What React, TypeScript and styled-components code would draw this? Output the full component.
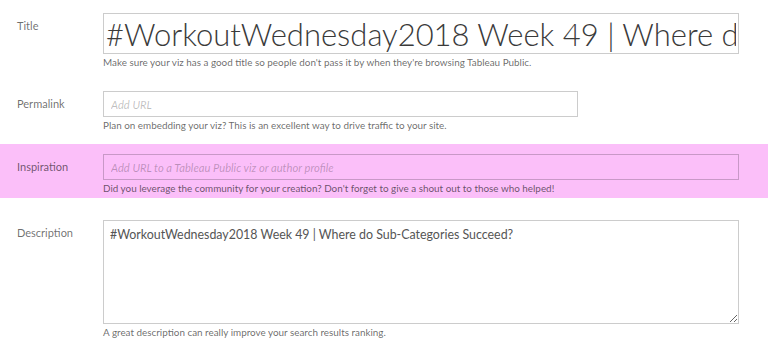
import styled, { createGlobalStyle } from "styled-components";

const Global = createGlobalStyle`
    html, body {
        margin: 0;
        padding: 0;
        background: #ffffff;
    }
    body {
        font-family: "Lato", "Liberation Sans", sans-serif;
        color: #666666;
    }
`;

const Form = styled.div`
    display: flex;
    flex-direction: column;
    gap: 9px;
    padding-top: 3px;
    width: 768px;
`;

const Row = styled.div<{ $highlight?: boolean; $top?: number }>`
    display: flex;
    align-items: flex-start;
    padding: ${p => p.$top ?? 10}px 0 4px 0;
    background: ${p => (p.$highlight ? "#fbbff9" : "transparent")};
`;

const Label = styled.div`
    width: 86px;
    padding-left: 17px;
    margin-top: 6px;
    font-size: 11px;
    line-height: 13px;
    color: rgba(0, 0, 0, 0.58);
`;

const Field = styled.div<{ $width: number }>`
    display: flex;
    flex-direction: column;
    width: ${p => p.$width}px;
`;

const Input = styled.input<{ $big?: boolean }>`
    box-sizing: border-box;
    width: 100%;
    height: ${p => (p.$big ? 41 : 26)}px;
    margin: 0;
    padding: ${p => (p.$big ? "0 2px" : "0 7px")};
    border: 1px solid rgba(0, 0, 0, 0.2);
    border-radius: 0;
    background: transparent;
    outline: none;
    font-family: "Lato", "Liberation Sans", sans-serif;
    font-size: ${p => (p.$big ? 31 : 12)}px;
    font-weight: ${p => (p.$big ? 300 : 400)};
    color: #3a3a3a;

    &::placeholder {
        color: rgba(0, 0, 0, 0.25);
        font-style: italic;
        font-size: 11.2px;
    }
`;

const TextArea = styled.textarea`
    box-sizing: border-box;
    width: 100%;
    height: 104px;
    margin: 0;
    padding: 6px 6px;
    border: 1px solid rgba(0, 0, 0, 0.2);
    border-radius: 0;
    background: transparent;
    outline: none;
    resize: vertical;
    font-family: "Lato", "Liberation Sans", sans-serif;
    font-size: 12.4px;
    line-height: 16px;
    color: #555555;
`;

const Hint = styled.div`
    margin-top: 2px;
    font-size: 9.9px;
    line-height: 12px;
    color: rgba(0, 0, 0, 0.6);
    white-space: nowrap;
`;

export default function App() {
    return (
        <>
            <Global />
            <Form>
                <Row>
                    <Label>Title</Label>
                    <Field $width={636}>
                        <Input $big readOnly value="#WorkoutWednesday2018 Week 49 | Where do Sub-Categories Succeed?" />
                        <Hint>Make sure your viz has a good title so people don't pass it by when they're browsing Tableau Public.</Hint>
                    </Field>
                </Row>
                <Row>
                    <Label>Permalink</Label>
                    <Field $width={475}>
                        <Input placeholder="Add URL" />
                        <Hint>Plan on embedding your viz? This is an excellent way to drive traffic to your site.</Hint>
                    </Field>
                </Row>
                <Row $highlight>
                    <Label>Inspiration</Label>
                    <Field $width={636}>
                        <Input placeholder="Add URL to a Tableau Public viz or author profile" />
                        <Hint>Did you leverage the community for your creation? Don't forget to give a shout out to those who helped!</Hint>
                    </Field>
                </Row>
                <Row $top={13}>
                    <Label>Description</Label>
                    <Field $width={636}>
                        <TextArea readOnly value="#WorkoutWednesday2018 Week 49 | Where do Sub-Categories Succeed?" />
                        <Hint>A great description can really improve your search results ranking.</Hint>
                    </Field>
                </Row>
            </Form>
        </>
    );
}
